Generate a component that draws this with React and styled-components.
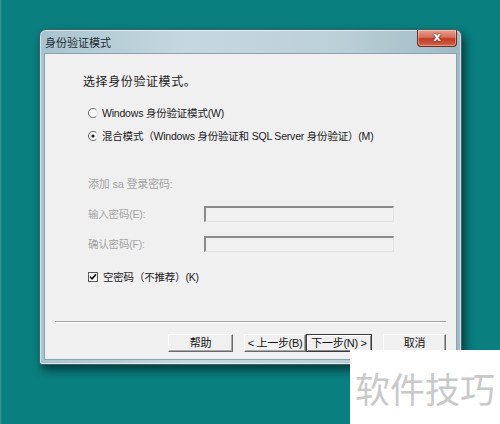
import React from 'react'
import styled, { createGlobalStyle } from 'styled-components'

const GlobalStyle = createGlobalStyle`
  html, body {
    margin: 0;
    padding: 0;
    background: #0a7f7f;
  }
  body {
    font-family: "Liberation Sans", "Noto Sans CJK SC", sans-serif;
  }
`

const Radio = ({ checked }) => (
  <svg width="12" height="12" viewBox="0 0 12 12">
    <circle cx="6" cy="6" r="4.6" fill="#f7f7f7" stroke="#dedede" strokeWidth="0.8" />
    <path d="M9.3 2.8 A4.6 4.6 0 1 0 9.3 9.2" stroke="#6f6f6f" strokeWidth="1" fill="none" />
    {checked && <circle cx="6" cy="6" r="1.6" fill="#1a1a1a" />}
  </svg>
)

const Check = () => (
  <svg width="10" height="10" viewBox="0 0 10 10">
    <rect x="0.5" y="0.5" width="9" height="9" fill="#ffffff" stroke="#5a5a5a" />
    <path d="M2 4.6 L4 6.9 L8 2.4" stroke="#111" strokeWidth="1.6" fill="none" />
  </svg>
)

const AuthModeDialog = () => {
  return (
    <Desktop>
      <Window>
        <TitleBar>
          <Title>身份验证模式</Title>
          <CloseButton>x</CloseButton>
        </TitleBar>
        <Frame>
          <Client>
            <Content>
              <Heading>选择身份验证模式。</Heading>

              <OptionRow top={15}>
                <Radio />
                <span>Windows 身份验证模式(W)</span>
              </OptionRow>
              <OptionRow top={7}>
                <Radio checked />
                <span>混合模式（Windows 身份验证和 SQL Server 身份验证）(M)</span>
              </OptionRow>

              <Muted>添加 sa 登录密码:</Muted>

              <FieldRow>
                <FieldLabel>输入密码(E):</FieldLabel>
                <Field />
              </FieldRow>
              <FieldRow>
                <FieldLabel>确认密码(F):</FieldLabel>
                <Field />
              </FieldRow>

              <CheckRow>
                <Check />
                <span>空密码（不推荐）(K)</span>
              </CheckRow>
            </Content>

            <Separator />

            <ButtonBar>
              <Button width={65}>帮助</Button>
              <ButtonGroup>
                <Button width={62}>&lt; 上一步(B)</Button>
                <Button width={66} primary>下一步(N) &gt;</Button>
              </ButtonGroup>
              <Button width={63}>取消</Button>
            </ButtonBar>
          </Client>
        </Frame>
      </Window>

      <Watermark>软件技巧</Watermark>
    </Desktop>
  )
}

const Desktop = styled.div`
  position: relative;
  width: 500px;
  height: 424px;
  box-sizing: border-box;
  padding: 29px 0 0 39px;
  overflow: hidden;
  background: linear-gradient(90deg, #3a9c9c 0, #0a7f7f 2px, #0a7f7f 100%);
`

const Window = styled.div`
  width: 423px;
  height: 336px;
  box-sizing: border-box;
  display: flex;
  flex-direction: column;
  border: 1px solid #3f5f6b;
  border-radius: 7px 7px 3px 3px;
  background: linear-gradient(90deg, #a9c4cf 0%, #c6d8df 35%, #bcd0d8 70%, #9fbac5 100%);
  box-shadow: 3px 5px 10px rgba(0, 20, 20, 0.65), inset 0 0 0 1px rgba(255, 255, 255, 0.55);
`

const TitleBar = styled.div`
  height: 23px;
  display: flex;
  align-items: flex-start;
  justify-content: space-between;
  padding-left: 5px;
`

const Title = styled.div`
  margin-top: 6px;
  font-size: 11px;
  line-height: 14px;
  color: #1c2a30;
`

const CloseButton = styled.div`
  width: 40px;
  height: 17px;
  margin-right: 4px;
  box-sizing: border-box;
  border: 1px solid #6d2a20;
  border-top: none;
  border-radius: 0 0 4px 4px;
  background: linear-gradient(180deg, #e9a08f 0%, #d7705b 45%, #c13b22 55%, #d1634a 100%);
  box-shadow: inset 0 0 0 1px rgba(255, 255, 255, 0.35);
  color: #ffffff;
  font: bold 12px/14px "DejaVu Sans", sans-serif;
  text-align: center;
  text-shadow: 0 0 2px #5a1a10, 0 0 1px #5a1a10;
`

const Frame = styled.div`
  flex: 1;
  display: flex;
  padding: 0 4px 4px 4px;
`

const Client = styled.div`
  flex: 1;
  display: flex;
  flex-direction: column;
  background: #f0f0f0;
  border: 1px solid #8aa3ae;
  font-size: 11px;
  line-height: 16px;
  color: #1a1a1a;
  letter-spacing: -0.2px;
`

const Content = styled.div`
  display: flex;
  flex-direction: column;
  align-items: flex-start;
  padding-left: 38px;
`

const Heading = styled.div`
  margin-top: 20px;
  font-size: 12px;
  letter-spacing: 0.6px;
`

const OptionRow = styled.div`
  margin-top: ${p => p.top}px;
  margin-left: 4px;
  display: flex;
  align-items: center;
  gap: 3px;
  font-size: 10.5px;
`

const Muted = styled.div`
  margin-top: 32px;
  margin-left: 5px;
  color: #a3a3a3;
`

const FieldRow = styled.div`
  margin-top: 14px;
  margin-left: 5px;
  display: flex;
  align-items: center;
`

const FieldLabel = styled.div`
  width: 116px;
  color: #a3a3a3;
  font-size: 10.5px;
`

const Field = styled.div`
  width: 190px;
  height: 16px;
  box-sizing: border-box;
  background: #f0f0f0;
  border-style: solid;
  border-width: 2px 1px 1px 2px;
  border-color: #8a8a8a #e2e2e2 #e2e2e2 #8a8a8a;
`

const CheckRow = styled.div`
  margin-top: 17px;
  margin-left: 5px;
  display: flex;
  align-items: center;
  gap: 5px;
  font-size: 10.5px;
`

const Separator = styled.div`
  margin: auto 10px 0 10px;
  height: 1px;
  background: #a0a0a0;
  border-bottom: 1px solid #ffffff;
`

const ButtonBar = styled.div`
  display: flex;
  justify-content: flex-end;
  gap: 11px;
  padding: 11px 10px 7px 0;
`

const ButtonGroup = styled.div`
  display: flex;
`

const Button = styled.div`
  width: ${p => p.width}px;
  height: 18px;
  box-sizing: border-box;
  display: flex;
  align-items: center;
  justify-content: center;
  background: #f0f0f0;
  font-size: 11px;
  letter-spacing: -0.3px;
  color: #111111;
  white-space: nowrap;
  border-style: solid;
  border-width: 1px;
  border-color: ${p => (p.primary ? '#3a3a3a' : '#ffffff #6a6a6a #6a6a6a #ffffff')};
  box-shadow: ${p => (p.primary
    ? 'inset 1px 1px 0 #ffffff, inset -1px -1px 0 #8a8a8a'
    : 'inset -1px -1px 0 #a8a8a8')};
`

const Watermark = styled.div`
  position: absolute;
  right: 0;
  bottom: 0;
  width: 150px;
  height: 74px;
  display: flex;
  align-items: center;
  justify-content: center;
  background: #ffffff;
  color: #c9c9c9;
  font: 35px/1 "Noto Sans CJK SC", sans-serif;
`

const App = () => (
  <>
    <GlobalStyle />
    <AuthModeDialog />
  </>
)

export default App
